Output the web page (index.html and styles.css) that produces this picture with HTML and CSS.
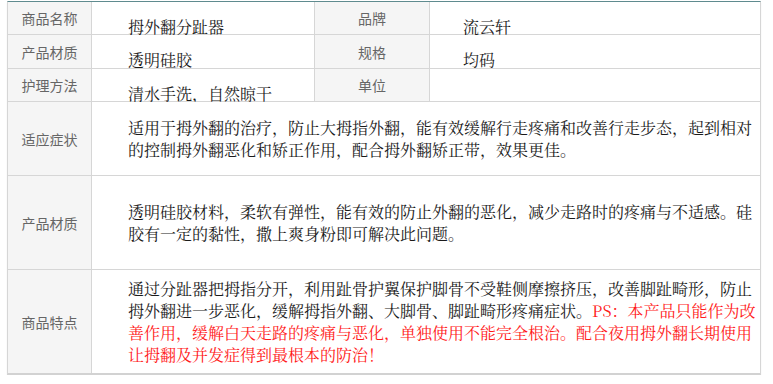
FILE: index.html
```html
<!DOCTYPE html>
<html lang="zh-CN">
<head>
<meta charset="utf-8">
<title>商品参数</title>
<link rel="stylesheet" href="styles.css">
</head>
<body>
<div class="spec">
  <div class="label">商品名称</div>
  <div class="value short first">拇外翻分趾器</div>
  <div class="label">品牌</div>
  <div class="value short">流云轩</div>

  <div class="label">产品材质</div>
  <div class="value short first">透明硅胶</div>
  <div class="label">规格</div>
  <div class="value short">均码</div>

  <div class="label">护理方法</div>
  <div class="value short first">清水手洗，自然晾干</div>
  <div class="label">单位</div>
  <div class="value short"></div>

  <div class="label">适应症状</div>
  <div class="value long"><p class="para">适用于拇外翻的治疗，防止大拇指外翻，能有效缓解行走疼痛和改善行走步态，起到相对的控制拇外翻恶化和矫正作用，配合拇外翻矫正带，效果更佳。</p></div>

  <div class="label">产品材质</div>
  <div class="value long"><p class="para">透明硅胶材料，柔软有弹性，能有效的防止外翻的恶化，减少走路时的疼痛与不适感。硅胶有一定的黏性，撒上爽身粉即可解决此问题。</p></div>

  <div class="label">商品特点</div>
  <div class="value long"><p class="para">通过分趾器把拇指分开，利用趾骨护翼保护脚骨不受鞋侧摩擦挤压，改善脚趾畸形，防止拇外翻进一步恶化，缓解拇指外翻、大脚骨、脚趾畸形疼痛症状。<span class="red">PS：本产品只能作为改善作用，缓解白天走路的疼痛与恶化，单独使用不能完全根治。配合夜用拇外翻长期使用让拇翻及并发症得到最根本的防治！</span></p></div>
</div>
</body>
</html>
```

FILE: styles.css
```css
html, body {
  margin: 0;
  padding: 0;
  background: #ffffff;
}

body {
  font-family: "Noto Sans CJK SC", "Noto Sans", sans-serif;
}

.spec {
  margin: 1px 0 0 7px;
  width: 752px;
  display: grid;
  grid-template-columns: 83px 222px 114px 330px;
  grid-template-rows: 32px 33px 32px 73px 93px 103px;
  gap: 1px;
  background: #d6d6d6;
  border-top: 1px solid #5f8b8f;
  border-left: 1px solid #d6d6d6;
  border-right: 1px solid #d6d6d6;
  border-bottom: 2px solid #d2d2d2;
  box-shadow: 0 2px 1px #e4e4e4;
}

.label {
  background: #f5f5f5;
  color: #666666;
  font-size: 14px;
  line-height: 20px;
  display: flex;
  align-items: center;
  justify-content: center;
}

.value {
  background: #ffffff;
  color: #1a1a1a;
  font-family: "Noto Serif CJK SC", "Noto Sans CJK SC", serif;
  font-size: 16px;
  line-height: 22px;
}

.value.short {
  padding: 14px 4px 0 33px;
}

.value.short.first {
  padding-left: 36px;
}

.value.long {
  grid-column: 2 / 5;
  padding: 1px 4px 0 36px;
  display: flex;
  align-items: center;
}

.para {
  margin: 0;
}

.red {
  color: #ff1a1a;
}
```
